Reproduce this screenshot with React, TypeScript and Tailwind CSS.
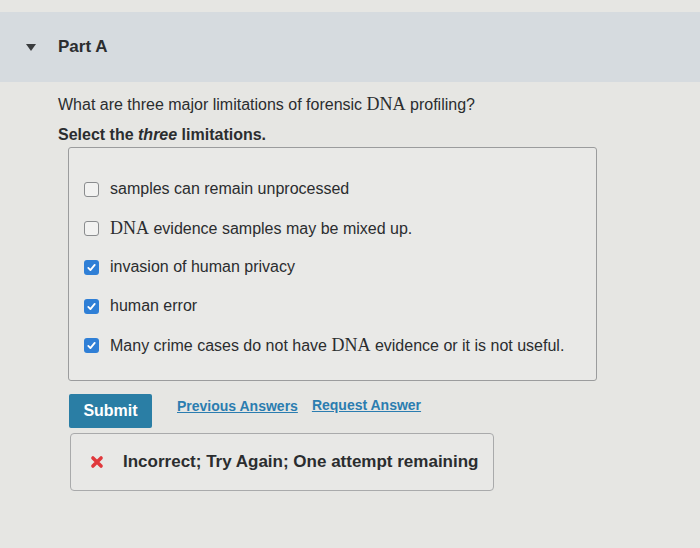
import React from 'react';

const options = [
  { label: 'samples can remain unprocessed', checked: false },
  { label: 'DNA| evidence samples may be mixed up.', checked: false },
  { label: 'invasion of human privacy', checked: true },
  { label: 'human error', checked: true },
  { label: 'Many crime cases do not have |DNA| evidence or it is not useful.', checked: true },
];

function Dna() {
  return <span className="font-['Liberation_Serif',serif] text-[18px]">DNA</span>;
}

function renderLabel(label: string) {
  const parts = label.split('|');
  return parts.map((p, i) => (p === 'DNA' ? <Dna key={i} /> : <span key={i}>{p}</span>));
}

function Checkbox({ checked }: { checked: boolean }) {
  if (checked) {
    return (
      <span className="w-[15px] h-[15px] rounded-[3px] bg-[#2f7fd6] flex items-center justify-center shrink-0">
        <svg viewBox="0 0 12 12" className="w-[11px] h-[11px]" fill="none" stroke="white" strokeWidth={2} strokeLinecap="round" strokeLinejoin="round">
          <path d="M2.5 6.5l2.3 2.3L9.5 3.2" />
        </svg>
      </span>
    );
  }
  return <span className="w-[15px] h-[15px] rounded-[3px] border-[1.5px] border-[#8a8c8e] bg-[#f2f2f1] shrink-0" />;
}

export default function App() {
  return (
    <div className="w-[700px] h-[548px] bg-[#e6e6e3] font-['Liberation_Sans',Arial,sans-serif] text-[#2b2d2f] overflow-hidden">
      <div className="h-[12px]" />
      <div className="h-[70px] bg-[#d6dbdf] flex items-center">
        <svg viewBox="0 0 10 8" className="w-[10px] h-[8px] ml-[26px] mt-[2px]" fill="#3a3c3e">
          <path d="M0 0h10L5 7z" />
        </svg>
        <span className="ml-[22px] text-[17px] font-bold">Part A</span>
      </div>

      <div className="pl-[58px] pt-[10px]">
        <p className="text-[16px] leading-[24px]">
          What are three major limitations of forensic <Dna /> profiling?
        </p>
        <p className="text-[16px] leading-[22px] font-bold mt-[7px]">
          Select the <i>three</i> limitations.
        </p>

        <div className="ml-[10px] mt-[1px] w-[529px] h-[234px] border border-[#9b9c9d] rounded-[3px] bg-[#e9e9e7] pt-[31px] pl-[15px] flex flex-col gap-[19px]">
          {options.map((o, i) => (
            <label key={i} className="flex items-center gap-[11px] text-[16px] h-[20px]">
              <Checkbox checked={o.checked} />
              <span>{renderLabel(o.label)}</span>
            </label>
          ))}
        </div>

        <div className="flex items-center mt-[13px] ml-[11px]">
          <button className="w-[83px] h-[34px] bg-[#2a7ea5] text-white text-[16px] font-bold rounded-[2px]">
            Submit
          </button>
          <a className="ml-[25px] text-[14px] font-bold text-[#2b7db0] underline -mt-[9px]">Previous Answers</a>
          <a className="ml-[14px] text-[14px] font-bold text-[#2b7db0] underline -mt-[12px]">Request Answer</a>
        </div>

        <div className="ml-[12px] mt-[5px] w-[424px] h-[58px] border border-[#a9aaab] rounded-[4px] bg-[#e8e8e6] flex items-center pl-[19px]">
          <svg viewBox="0 0 12 12" className="w-[14px] h-[14px]" fill="none" stroke="#e0383c" strokeWidth={3} strokeLinecap="round">
            <path d="M2.5 2.5l7 7M9.5 2.5l-7 7" />
          </svg>
          <span className="ml-[19px] text-[17px] font-bold">Incorrect; Try Again; One attempt remaining</span>
        </div>
      </div>
    </div>
  );
}
